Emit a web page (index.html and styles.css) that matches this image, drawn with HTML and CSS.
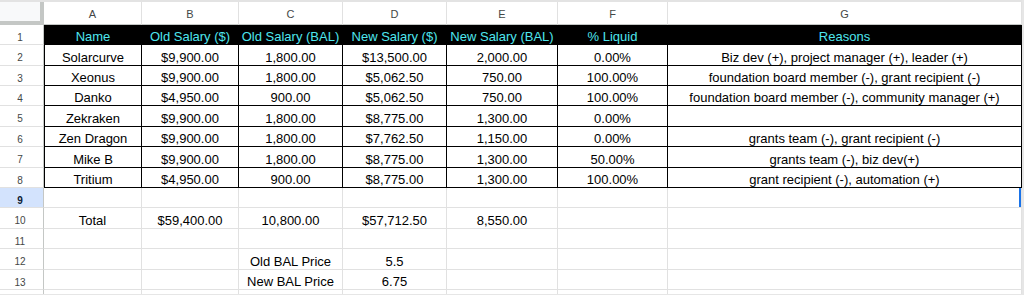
FILE: index.html
```html
<!DOCTYPE html>
<html>
<head>
<meta charset="utf-8">
<link rel="stylesheet" href="styles.css">
</head>
<body>
<div class="sheet">
  <div class="corner"></div>
  <div class="ch">A</div><div class="ch">B</div><div class="ch">C</div><div class="ch">D</div><div class="ch">E</div><div class="ch">F</div><div class="ch">G</div>

  <div class="rh">1</div>
  <div class="c th first">Name</div><div class="c th">Old Salary ($)</div><div class="c th">Old Salary (BAL)</div><div class="c th">New Salary ($)</div><div class="c th">New Salary (BAL)</div><div class="c th">% Liquid</div><div class="c th">Reasons</div>

  <div class="rh">2</div>
  <div class="c b first">Solarcurve</div><div class="c b">$9,900.00</div><div class="c b">1,800.00</div><div class="c b">$13,500.00</div><div class="c b">2,000.00</div><div class="c b">0.00%</div><div class="c b">Biz dev (+), project manager (+), leader (+)</div>

  <div class="rh">3</div>
  <div class="c b first">Xeonus</div><div class="c b">$9,900.00</div><div class="c b">1,800.00</div><div class="c b">$5,062.50</div><div class="c b">750.00</div><div class="c b">100.00%</div><div class="c b">foundation board member (-), grant recipient (-)</div>

  <div class="rh">4</div>
  <div class="c b first">Danko</div><div class="c b">$4,950.00</div><div class="c b">900.00</div><div class="c b">$5,062.50</div><div class="c b">750.00</div><div class="c b">100.00%</div><div class="c b">foundation board member (-), community manager (+)</div>

  <div class="rh">5</div>
  <div class="c b first">Zekraken</div><div class="c b">$9,900.00</div><div class="c b">1,800.00</div><div class="c b">$8,775.00</div><div class="c b">1,300.00</div><div class="c b">0.00%</div><div class="c b"></div>

  <div class="rh">6</div>
  <div class="c b first">Zen Dragon</div><div class="c b">$9,900.00</div><div class="c b">1,800.00</div><div class="c b">$7,762.50</div><div class="c b">1,150.00</div><div class="c b">0.00%</div><div class="c b">grants team (-), grant recipient (-)</div>

  <div class="rh">7</div>
  <div class="c b first">Mike B</div><div class="c b">$9,900.00</div><div class="c b">1,800.00</div><div class="c b">$8,775.00</div><div class="c b">1,300.00</div><div class="c b">50.00%</div><div class="c b">grants team (-), biz dev(+)</div>

  <div class="rh">8</div>
  <div class="c b first">Tritium</div><div class="c b">$4,950.00</div><div class="c b">900.00</div><div class="c b">$8,775.00</div><div class="c b">1,300.00</div><div class="c b">100.00%</div><div class="c b">grant recipient (-), automation (+)</div>

  <div class="rh sel">9</div>
  <div class="c"></div><div class="c"></div><div class="c"></div><div class="c"></div><div class="c"></div><div class="c"></div><div class="c last-sel"></div>

  <div class="rh">10</div>
  <div class="c">Total</div><div class="c">$59,400.00</div><div class="c">10,800.00</div><div class="c">$57,712.50</div><div class="c">8,550.00</div><div class="c"></div><div class="c"></div>

  <div class="rh">11</div>
  <div class="c"></div><div class="c"></div><div class="c"></div><div class="c"></div><div class="c"></div><div class="c"></div><div class="c"></div>

  <div class="rh">12</div>
  <div class="c"></div><div class="c"></div><div class="c">Old BAL Price</div><div class="c">5.5</div><div class="c"></div><div class="c"></div><div class="c"></div>

  <div class="rh">13</div>
  <div class="c"></div><div class="c"></div><div class="c">New BAL Price</div><div class="c">6.75</div><div class="c"></div><div class="c"></div><div class="c"></div>

  <div class="rh tail"></div>
  <div class="c tail"></div><div class="c tail"></div><div class="c tail"></div><div class="c tail"></div><div class="c tail"></div><div class="c tail"></div><div class="c tail"></div>
</div>
</body>
</html>
```

FILE: styles.css
```css
html, body {
  margin: 0;
  padding: 0;
  background: #e6e6e6;
  overflow: hidden;
}

.sheet {
  width: 1022px;
  background: #fff;
  border-top: 2px solid #e3e3e3;
  display: grid;
  grid-template-columns: 44px 98px 97px 104px 104px 111px 110px 354px;
  grid-template-rows: 23px 20px 21px 20px 20px 21px 20px 21px 20px 20px 21px 20px 21px 20px 4px;
  font-family: "Liberation Sans", Arial, sans-serif;
  font-size: 13px;
  color: #000;
}

.corner {
  background: #f8f9fa;
  border-right: 4px solid #c4c7c5;
  border-bottom: 4px solid #c4c7c5;
}

.ch {
  display: flex;
  align-items: center;
  justify-content: center;
  font-size: 11px;
  color: #444746;
  border-right: 1px solid #e1e1e1;
  border-bottom: 1px solid #c4c7c5;
  padding-top: 1px;
}

.rh {
  display: flex;
  align-items: center;
  justify-content: center;
  font-size: 10px;
  color: #444746;
  border-right: 1px solid #c4c7c5;
  border-bottom: 1px solid #e1e1e1;
  padding-right: 3px;
  padding-top: 5px;
}

.rh.sel {
  background: #d3e3fd;
  font-weight: bold;
  color: #0b1a33;
}

.c {
  display: flex;
  align-items: flex-end;
  justify-content: center;
  white-space: nowrap;
  overflow: hidden;
  border-right: 1px solid #e1e1e1;
  border-bottom: 1px solid #e1e1e1;
  padding-bottom: 0;
  line-height: 15px;
}

.tail {
  padding: 0;
  border-bottom: 0;
}

.c.b,
.c.th {
  border-right: 1px solid #000;
  border-bottom: 1px solid #000;
}

.c.first {
  border-left: 1px solid #000;
}

.c.th {
  background: #000;
  color: #4fe6ee;
}

.c.last-sel {
  box-shadow: inset -2px 0 0 #1a73e8;
}
```
